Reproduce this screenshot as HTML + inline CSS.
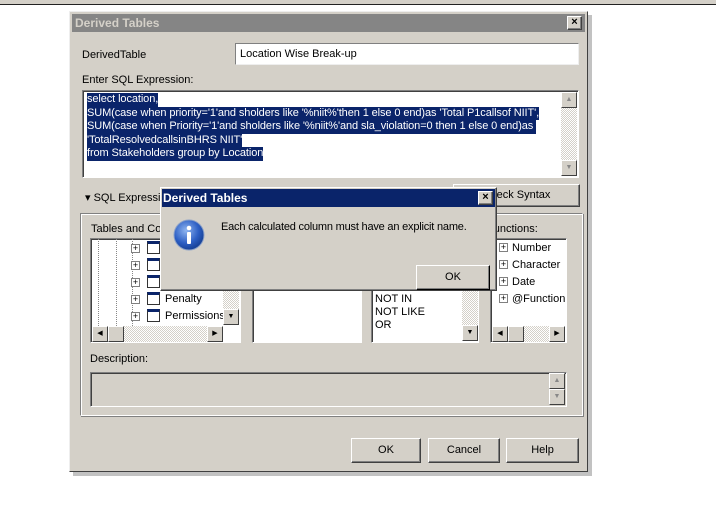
<!DOCTYPE html>
<html><head><style>
*{box-sizing:border-box}
body{margin:0;width:716px;height:509px;background:#fff;position:relative;overflow:hidden;font-family:"Liberation Sans",sans-serif;font-size:11px;color:#000}
.a{position:absolute}
.sunk{background:#fff;border:1px solid;border-color:#808080 #fff #fff #808080;box-shadow:inset 1px 1px 0 #404040}
.btn{position:absolute;background:#d4d0c8;border:1px solid;border-color:#fff #404040 #404040 #fff;box-shadow:inset -1px -1px 0 #808080;text-align:center;font-size:11px}
.sb{position:absolute;background:#d4d0c8;border:1px solid;border-color:#fff #404040 #404040 #fff;width:16px;height:16px;font-size:7px;text-align:center;line-height:14px;color:#000}
.track{position:absolute;background:repeating-conic-gradient(#fff 0 25%,#d4d0c8 0 50%) 0 0/2px 2px}
.sel{background:#0a246a;color:#fff;display:inline-block;height:13.5px}
.pl{position:absolute;width:9px;height:9px;border:1px solid #808080;background:#fff;font-size:9px;line-height:6px;text-align:center}
.tb{position:absolute;width:13px;height:13px;border:1px solid #333;border-top:3px solid #0a246a;background:#fff}
</style></head><body>
<div class="a" style="left:0;top:0;width:716px;height:4px;background:#d4d0c8"></div>
<div class="a" style="left:0;top:4px;width:716px;height:1px;background:#222"></div>
<div class="a" style="left:73px;top:15px;width:519px;height:461px;background:#999;opacity:.6"></div>
<div class="a" style="left:69px;top:11px;width:519px;height:461px;background:#d4d0c8;border:1px solid;border-color:#eee #404040 #404040 #eee"></div>
<div class="a" style="left:72px;top:14px;width:513px;height:18px;background:#858585;color:#d4d0c8;font-weight:bold;font-size:12px;line-height:18px;padding-left:3px">Derived Tables</div>
<div class="btn" style="left:567px;top:16px;width:15px;height:14px;font-size:11px;line-height:11px;font-weight:bold">×</div>
<div class="a" style="left:82px;top:49px">DerivedTable</div>
<div class="a sunk" style="left:235px;top:43px;width:344px;height:22px;padding:4px 4px;box-shadow:none;border-color:#808080 #eee #eee #808080">Location Wise Break-up</div>
<div class="a" style="left:82px;top:74px">Enter SQL Expression:</div>
<div class="a sunk" style="left:82px;top:90px;width:497px;height:88px"></div>
<div class="a" style="left:87px;top:93px;line-height:13.5px;font-size:11px;letter-spacing:-0.1px">
<span class="sel">select location,</span><br><span class="sel">SUM(case when priority='1'and sholders like '%niit%'then 1 else 0 end)as 'Total P1callsof NIIT',</span><br><span class="sel">SUM(case when Priority='1'and sholders like '%niit%'and sla_violation=0 then 1 else 0 end)as&nbsp;</span><br><span class="sel">'TotalResolvedcallsinBHRS NIIT'</span><br><span class="sel">from Stakeholders group by Location</span></div>
<div class="track" style="left:561px;top:92px;width:16px;height:84px"></div>
<div class="sb" style="left:561px;top:92px;color:#888">▲</div>
<div class="sb" style="left:561px;top:160px;color:#888">▼</div>
<div class="a" style="left:85px;top:191px">▾ SQL Expressi</div>
<div class="btn" style="left:453px;top:184px;width:127px;height:23px;line-height:20px">Check Syntax</div>
<div class="a" style="left:80px;top:213px;width:503px;height:203px;border:1px solid;border-color:#808080 #fff #fff #808080;box-shadow:1px 1px 0 #808080,inset 1px 1px 0 #fff"></div>
<div class="a" style="left:91px;top:223px">Tables and Co</div>
<div class="a sunk" style="left:90px;top:238px;width:151px;height:105px;overflow:hidden">
 <div class="a" style="left:7px;top:0;height:87px;border-left:1px dotted #888"></div>
 <div class="a" style="left:25px;top:0;height:87px;border-left:1px dotted #888"></div>
 <div class="a" style="left:41px;top:0;height:87px;border-left:1px dotted #888"></div>
 <div class="pl" style="left:40px;top:5px">+</div><div class="tb" style="left:56px;top:2px"></div>
 <div class="pl" style="left:40px;top:22px">+</div><div class="tb" style="left:56px;top:19px"></div>
 <div class="pl" style="left:40px;top:39px">+</div><div class="tb" style="left:56px;top:36px"></div>
 <div class="pl" style="left:40px;top:56px">+</div><div class="tb" style="left:56px;top:53px"></div><div class="a" style="left:74px;top:54px">Penalty</div>
 <div class="pl" style="left:40px;top:73px">+</div><div class="tb" style="left:56px;top:70px"></div><div class="a" style="left:74px;top:71px">Permissions</div>
 <div class="track" style="left:132px;top:0;width:16px;height:86px"></div>
 <div class="sb" style="left:132px;top:70px">▼</div>
 <div class="track" style="left:1px;top:87px;width:131px;height:16px"></div>
 <div class="sb" style="left:1px;top:87px">◀</div><div class="sb" style="left:17px;top:87px"></div><div class="sb" style="left:116px;top:87px">▶</div>
</div>
<div class="a sunk" style="left:252px;top:238px;width:110px;height:105px"></div>
<div class="a sunk" style="left:371px;top:238px;width:108px;height:105px;overflow:hidden">
 <div class="a" style="left:3px;top:54px;line-height:13px">NOT IN<br>NOT LIKE<br>OR</div>
 <div class="track" style="left:90px;top:1px;width:16px;height:101px"></div>
 <div class="sb" style="left:90px;top:86px">▼</div>
</div>
<div class="a" style="left:487px;top:223px">Functions:</div>
<div class="a sunk" style="left:490px;top:238px;width:77px;height:105px;overflow:hidden">
 <div class="pl" style="left:8px;top:4px">+</div><div class="a" style="left:21px;top:3px">Number</div>
 <div class="pl" style="left:8px;top:21px">+</div><div class="a" style="left:21px;top:20px">Character</div>
 <div class="pl" style="left:8px;top:38px">+</div><div class="a" style="left:21px;top:37px">Date</div>
 <div class="pl" style="left:8px;top:55px">+</div><div class="a" style="left:21px;top:54px">@Function</div>
 <div class="track" style="left:1px;top:87px;width:73px;height:16px"></div>
 <div class="sb" style="left:1px;top:87px">◀</div><div class="sb" style="left:17px;top:87px"></div><div class="sb" style="left:58px;top:87px">▶</div>
</div>
<div class="a" style="left:90px;top:353px">Description:</div>
<div class="a" style="left:90px;top:372px;width:477px;height:35px;border:1px solid;border-color:#808080 #fff #fff #808080;box-shadow:inset 1px 1px 0 #404040"></div>
<div class="sb" style="left:549px;top:373px;color:#888">▲</div>
<div class="sb" style="left:549px;top:389px;color:#888">▼</div>
<div class="btn" style="left:351px;top:438px;width:70px;height:25px;line-height:22px">OK</div>
<div class="btn" style="left:428px;top:438px;width:72px;height:25px;line-height:22px">Cancel</div>
<div class="btn" style="left:506px;top:438px;width:73px;height:25px;line-height:22px">Help</div>
<div class="a" style="left:160px;top:187px;width:337px;height:104px;background:#d4d0c8;border:1px solid;border-color:#fff #404040 #404040 #fff;box-shadow:inset -1px -1px 0 #808080"></div>
<div class="a" style="left:162px;top:189px;width:333px;height:18px;background:#0a246a;color:#fff;font-weight:bold;font-size:12px;line-height:18px;padding-left:1px">Derived Tables</div>
<div class="btn" style="left:478px;top:191px;width:15px;height:14px;font-size:11px;line-height:11px;font-weight:bold">×</div>
<svg class="a" style="left:173px;top:219px" width="32" height="32" viewBox="0 0 32 32"><defs><radialGradient id="g" cx=".4" cy=".35" r=".7"><stop offset="0" stop-color="#8fb5f0"/><stop offset=".6" stop-color="#2d5fc4"/><stop offset="1" stop-color="#123a8c"/></radialGradient></defs><circle cx="16" cy="16" r="15" fill="url(#g)" stroke="#8aa0c8"/><circle cx="16" cy="9" r="2.3" fill="#fff"/><rect x="14" y="13" width="4" height="12" rx="1" fill="#fff"/></svg>
<div class="a" style="left:221px;top:221px;letter-spacing:-0.2px">Each calculated column must have an explicit name.</div>
<div class="btn" style="left:416px;top:265px;width:74px;height:25px;line-height:22px;border-color:#fff #000 #000 #fff">OK</div>
</body></html>
